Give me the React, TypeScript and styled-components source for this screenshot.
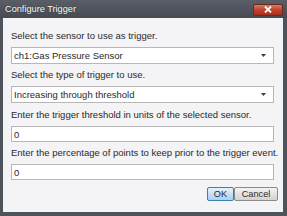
import React from "react"
import styled, { createGlobalStyle } from "styled-components"

const GlobalStyle = createGlobalStyle`
  html, body {
    margin: 0;
    padding: 0;
    background: #ffffff;
  }
  * {
    box-sizing: border-box;
  }
`

const Window = styled.div`
  width: 287px;
  height: 216px;
  display: flex;
  flex-direction: column;
  background: #4f545c;
  font-family: "Liberation Sans", Arial, sans-serif;
`

const TitleBar = styled.div`
  height: 18px;
  display: flex;
  align-items: center;
  justify-content: space-between;
  padding: 0 4px 0 5px;
  background: linear-gradient(#5a5f67, #464a52);
`

const Title = styled.span`
  color: #ffffff;
  font-size: 9.2px;
  text-shadow: 0 0 1px #1c1e22;
`

const CloseButton = styled.div`
  width: 30px;
  height: 12px;
  margin-top: 1px;
  display: flex;
  align-items: center;
  justify-content: center;
  border: 1px solid #6a2a20;
  border-radius: 2px;
  background: linear-gradient(#dc7a62, #c0432f 50%, #a8301f);
`

const Body = styled.div`
  flex: 1;
  margin: 0 4px 4px 3px;
  padding: 12px 9px 0 8px;
  background: #f4f3f5;
  display: flex;
  flex-direction: column;
`

const Label = styled.div<{ $top: number }>`
  margin-top: ${(p) => p.$top}px;
  font-size: 9.5px;
  line-height: 12px;
  color: #2a2a2a;
  white-space: nowrap;
`

const DropBox = styled.div`
  margin-top: 5px;
  height: 17px;
  display: flex;
  align-items: center;
  justify-content: space-between;
  padding: 0 7px 0 2px;
  border: 1px solid #b7b7b7;
  background: #ffffff;
  font-size: 9.5px;
  color: #2a2a2a;
`

const TextBox = styled.input`
  display: block;
  width: 100%;
  margin: 5px 0 0;
  height: 16px;
  padding: 0 2px;
  border: 1px solid #b7b7b7;
  background: #ffffff;
  font-family: "Liberation Sans", Arial, sans-serif;
  font-size: 9.5px;
  color: #2a2a2a;
  outline: none;
`

const ButtonRow = styled.div`
  margin: 7px -4px 0 0;
  display: flex;
  justify-content: flex-end;
`

const Button = styled.div<{ $primary?: boolean }>`
  height: 14px;
  width: ${(p) => (p.$primary ? 27 : 44)}px;
  display: flex;
  align-items: center;
  justify-content: center;
  font-size: 9.2px;
  color: #2a2a2a;
  border: 1px solid ${(p) => (p.$primary ? "#3c7fb1" : "#8a8a8a")};
  border-radius: 2px;
  background: ${(p) =>
    p.$primary
      ? "linear-gradient(#e8f3fc, #c4e0f6 50%, #a9d2f2)"
      : "linear-gradient(#f3f3f3, #e3e3e3 50%, #d2d2d2)"};
`

const Caret = () => (
  <svg width="5" height="3" viewBox="0 0 5 3">
    <path d="M0 0 L5 0 L2.5 3 Z" fill="#3a3d42" />
  </svg>
)

const CloseGlyph = () => (
  <svg width="8" height="7" viewBox="0 0 8 7">
    <path d="M1 0.5 L7 6.5 M7 0.5 L1 6.5" stroke="#ffffff" strokeWidth="1.8" />
  </svg>
)

export default function App() {
  return (
    <>
      <GlobalStyle />
      <Window>
        <TitleBar>
          <Title>Configure Trigger</Title>
          <CloseButton>
            <CloseGlyph />
          </CloseButton>
        </TitleBar>
        <Body>
          <Label $top={0}>Select the sensor to use as trigger.</Label>
          <DropBox>
            <span>ch1:Gas Pressure Sensor</span>
            <Caret />
          </DropBox>
          <Label $top={5}>Select the type of trigger to use.</Label>
          <DropBox>
            <span>Increasing through threshold</span>
            <Caret />
          </DropBox>
          <Label $top={6}>Enter the trigger threshold in units of the selected sensor.</Label>
          <TextBox value="0" readOnly />
          <Label $top={5}>Enter the percentage of points to keep prior to the trigger event.</Label>
          <TextBox value="0" readOnly />
          <ButtonRow>
            <Button $primary>OK</Button>
            <Button>Cancel</Button>
          </ButtonRow>
        </Body>
      </Window>
    </>
  )
}
